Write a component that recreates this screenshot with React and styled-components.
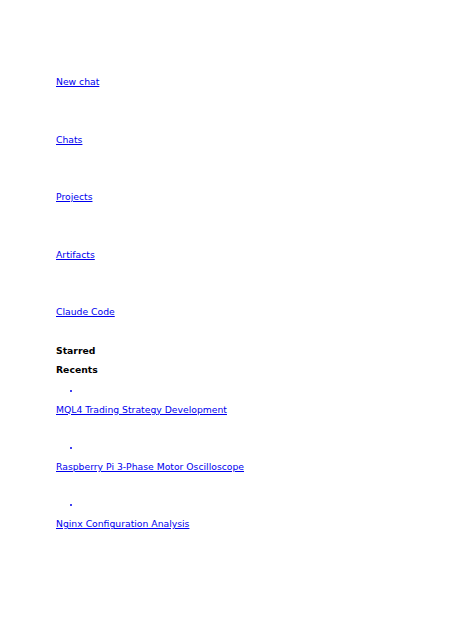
import styled, { createGlobalStyle } from 'styled-components';

const GlobalStyle = createGlobalStyle`
  body {
    margin: 0;
    background: #ffffff;
    font-family: "DejaVu Sans", sans-serif;
    font-size: 9.25px;
    line-height: 13px;
  }
`;

const Sidebar = styled.nav`
  display: flex;
  flex-direction: column;
  padding: 75px 0 0 56px;
`;

const NavList = styled.div`
  display: flex;
  flex-direction: column;
  gap: 44.5px;
`;

const NavLink = styled.a`
  color: #0000ee;
  text-decoration: underline;
`;

const Section = styled.h2`
  margin: 0;
  font-size: 9.25px;
  font-weight: bold;
  line-height: 13px;
  color: #000000;
  margin-top: ${(p) => p.$top || 0}px;
`;

const Recents = styled.ul`
  list-style: none;
  margin: 7.5px 0 0 0;
  padding: 0;
  display: flex;
  flex-direction: column;
  gap: 25.4px;
`;

const RecentItem = styled.li`
  display: flex;
  flex-direction: column;
  gap: 6px;
  align-items: flex-start;
`;

const Bullet = styled.span`
  display: block;
  width: 2px;
  height: 2px;
  margin: 6px 0 5px 14px;
  border-radius: 50%;
  background: #0000ee;
`;

const nav = ['New chat', 'Chats', 'Projects', 'Artifacts', 'Claude Code'];
const recents = [
  'MQL4 Trading Strategy Development',
  'Raspberry Pi 3-Phase Motor Oscilloscope',
  'Nginx Configuration Analysis',
];

export default function App() {
  return (
    <>
      <GlobalStyle />
      <Sidebar>
        <NavList>
          {nav.map((label) => (
            <NavLink key={label} href="#">
              {label}
            </NavLink>
          ))}
        </NavList>
        <Section $top={26}>Starred</Section>
        <Section $top={6}>Recents</Section>
        <Recents>
          {recents.map((title) => (
            <RecentItem key={title}>
              <Bullet />
              <NavLink href="#">{title}</NavLink>
            </RecentItem>
          ))}
        </Recents>
      </Sidebar>
    </>
  );
}
